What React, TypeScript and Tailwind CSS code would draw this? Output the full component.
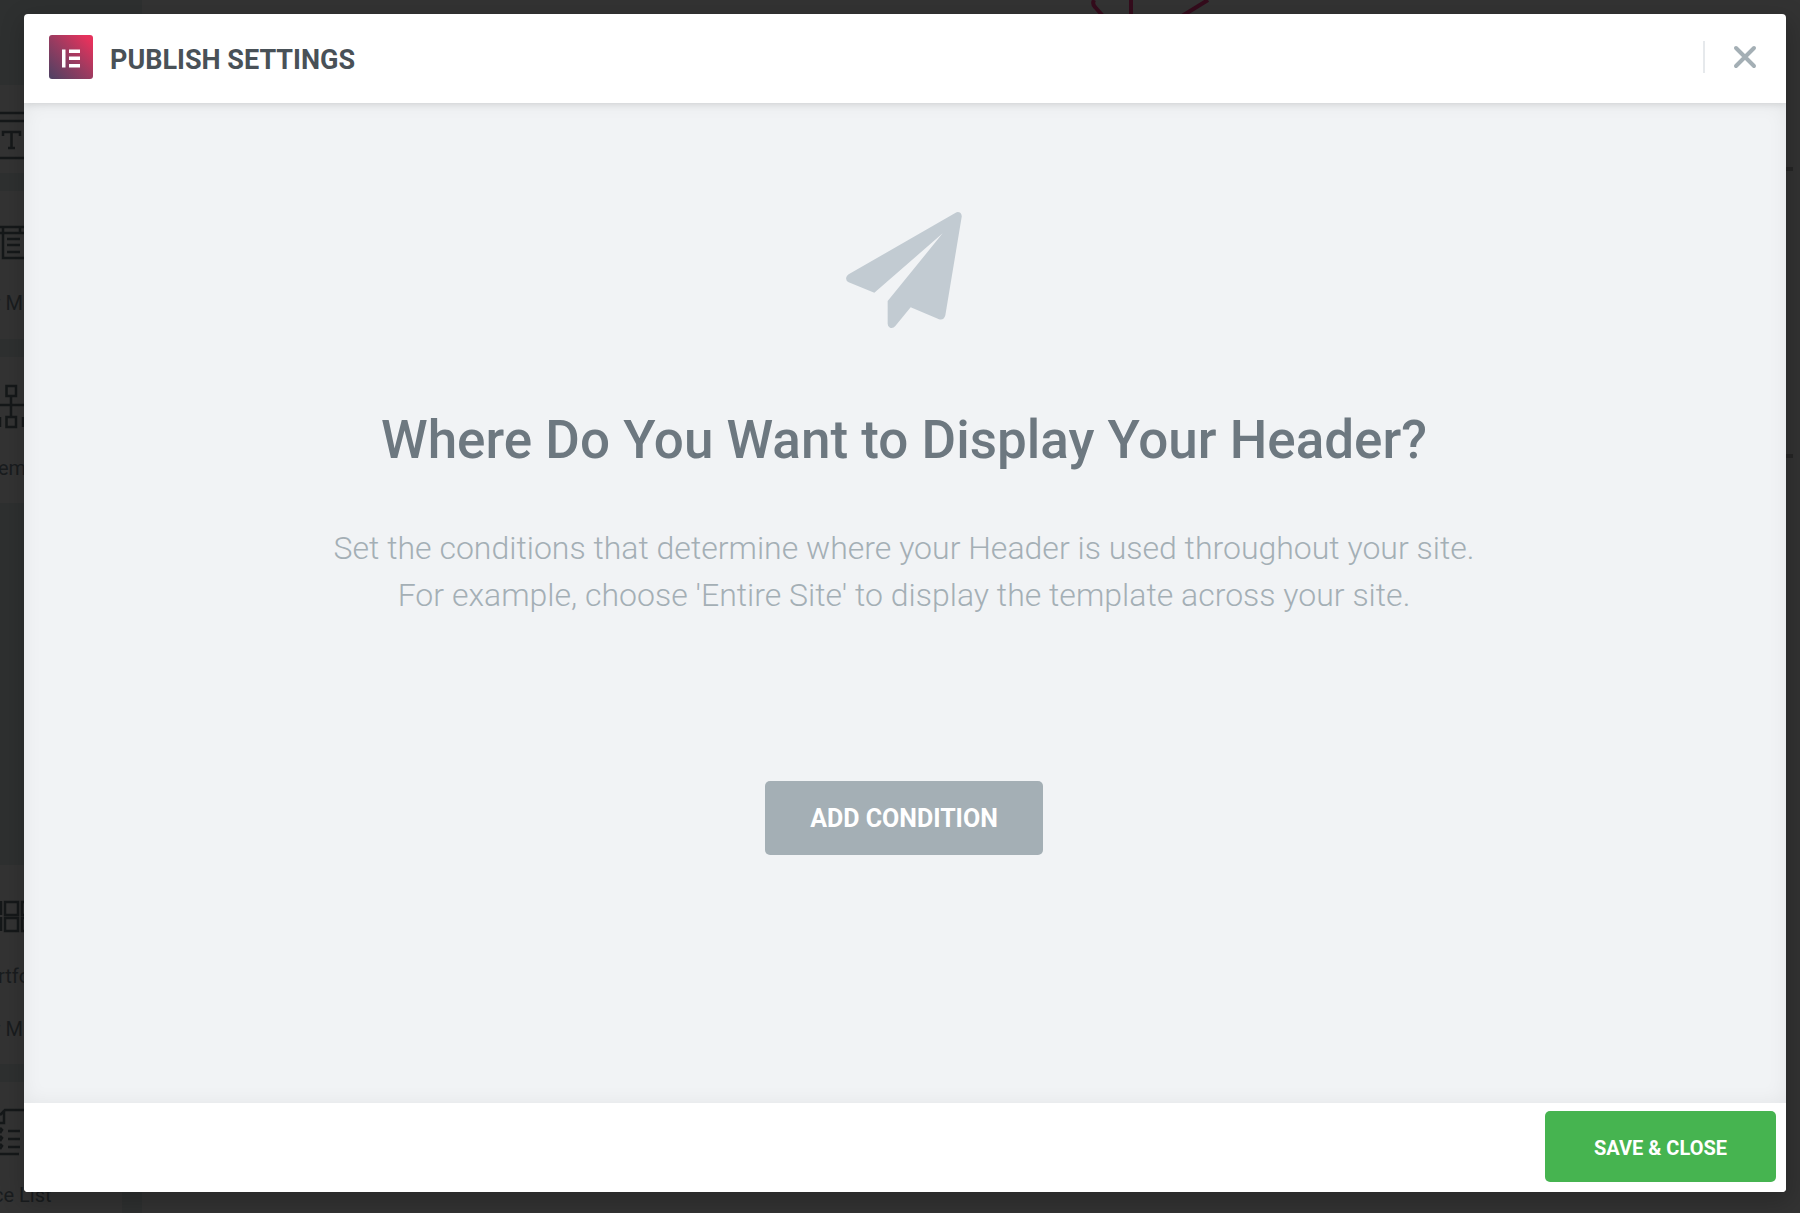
import React from "react";

function PlaneIcon() {
  return (
    <svg className="size-[116px]" viewBox="0 0 348 348" fill="#c2cbd2" aria-hidden="true">
      <path d="M329 2 C338 -3 349 4 347 15 L298 310 Q294 326 279 322 L194 286 L148 342 Q141 350 132 347 Q125 344 125 335 V267 L290 64 L85 242 L8 211 Q-2 206 1 196 Q2 191 8 187 Z" />
    </svg>
  );
}

function LogoMark() {
  return (
    <svg className="size-11" viewBox="0 0 44 44" aria-hidden="true">
      <defs>
        <linearGradient id="mark" x1="0" y1="1" x2="1" y2="0">
          <stop offset="0" stopColor="#4c4163" />
          <stop offset="0.5" stopColor="#9b3b60" />
          <stop offset="0.9" stopColor="#e5325c" />
        </linearGradient>
      </defs>
      <rect width="44" height="44" rx="3" fill="url(#mark)" />
      <path
        fill="#fff"
        d="M13 14.500h3.500v18h-3.500zM20 14.500h11v3.500h-11zM20 21.500h11v3.500h-11zM20 29h11v3.500h-11z"
      />
    </svg>
  );
}

function CloseIcon() {
  return (
    <svg className="size-6" viewBox="0 0 24 24" stroke="#a4afb5" strokeWidth="4" strokeLinecap="round" aria-hidden="true">
      <path d="M3 3L21 21M21 3L3 21" />
    </svg>
  );
}

const glyph = "block h-[50px] w-6 shrink-0";

function Backdrop() {
  return (
    <div aria-hidden="true" className="absolute inset-0 flex overflow-hidden bg-[#333333] text-[20px] leading-6 text-[#191c1e]">
      <div className="flex w-[142px] shrink-0 flex-col bg-[#2e3030] pt-[85px] pr-5">
        <div className="h-[88px] bg-[#333333] pt-[25px]">
          <svg className={glyph} viewBox="0 0 24 50" fill="none" stroke="#151819" strokeWidth="2.5">
            <path d="M0 3H24M0 11H24M0 48H24M3 26V22H20V26M11.500 22V38M8 38H15" />
          </svg>
        </div>
        <div className="mt-[18px] h-[148px] bg-[#333333] pt-[33px]">
          <svg className={glyph} viewBox="0 0 24 50" fill="none" stroke="#151819" strokeWidth="2.5">
            <path d="M0 3H24M0 9H24M3 3V34H24M20 3V9M7 15H20M7 21H20M7 28H20" />
          </svg>
          <p className="-ml-[9px] pt-[17px] whitespace-nowrap">y M</p>
        </div>
        <div className="mt-[18px] h-[146px] bg-[#333333] pt-[25px]">
          <svg className={glyph} viewBox="0 0 24 50" fill="none" stroke="#151819" strokeWidth="2.5">
            <path d="M6.500 4H16V14H6.500ZM6.500 35H16V45H6.500ZM11 14V35M0 23H24M0 35V45M23 35V45" />
          </svg>
          <p className="-ml-0.5 pt-6 whitespace-nowrap">em</p>
        </div>
        <div className="mt-[362px] h-[199px] bg-[#333333] pt-[33px]">
          <svg className={glyph} viewBox="0 0 24 50" fill="none" stroke="#151819" strokeWidth="2.5">
            <path d="M5 4H18V17H5ZM5 20H18V33H5ZM1 3V17M1 19V33M25 4H22V17H25M25 20H22V33H25" />
          </svg>
          <p className="-ml-0.5 pt-4 whitespace-nowrap">rtfo</p>
          <p className="-ml-[9px] pt-[29px] whitespace-nowrap">y M</p>
        </div>
        <div className="mt-[18px] flex-1 bg-[#333333] pt-[25px]">
          <svg className={glyph} viewBox="0 0 24 50" fill="none" stroke="#151819" strokeWidth="2.5">
            <path d="M0 8L5 3H24M4 3V16H0M0 21L2 23L0 26M0 29L2 31L0 34M0 37L2 39L0 42M8 24H20M8 32H20M8 40H20M0 47H19" />
          </svg>
          <p className="-ml-[7px] pt-[26px] whitespace-nowrap">ce List</p>
        </div>
      </div>
      <div className="flex flex-1 justify-between">
        <svg className="ml-[948px] h-4 w-32" viewBox="0 0 128 16" fill="none" stroke="#340c1c" strokeWidth="4">
          <path d="M4 0Q2 4 5 7L13 16M41 0V16M118 0L92 16" />
        </svg>
        <div className="mt-[167px] mr-[7px] flex w-10 flex-col gap-[283px]">
          <div className="h-1 bg-[#262626]" />
          <div className="h-1 bg-[#262626]" />
        </div>
      </div>
    </div>
  );
}

export default function App() {
  return (
    <div className="relative flex min-h-screen flex-col bg-[#333333] pt-3.5 pr-3.5 pb-[21px] pl-6 font-['Roboto',sans-serif]">
      <Backdrop />
      <div
        role="dialog"
        aria-labelledby="dialog-title"
        className="relative flex flex-1 flex-col overflow-hidden rounded bg-white shadow-[2px_8px_23px_3px_rgba(0,0,0,0.2)]"
      >
        <header className="relative z-10 flex h-[89px] shrink-0 items-center justify-between pr-[29px] pb-[3px] pl-[25px] shadow-[0_0_8px_rgba(0,0,0,0.15)]">
          <div className="flex items-center gap-[17px]">
            <LogoMark />
            <h1 id="dialog-title" className="pt-1.5 text-[27px] leading-8 font-bold text-[#495157]">
              PUBLISH SETTINGS
            </h1>
          </div>
          <div className="flex h-8 items-center border-l-2 border-[#e6e9ec] pl-7">
            <button type="button" aria-label="Close" className="flex">
              <CloseIcon />
            </button>
          </div>
        </header>
        <main className="flex flex-1 flex-col items-center bg-[#f1f3f5] pt-[109px] pr-0.5 text-center shadow-[inset_0_0_20px_rgba(0,0,0,0.06)]">
          <PlaneIcon />
          <h2 className="mt-20 text-[53px] leading-[64px] font-medium text-[#6d7880]">
            Where Do You Want to Display Your Header?
          </h2>
          <p className="mt-[53px] text-[32px] leading-[47px] font-light text-[#a4afb5]">
            Set the conditions that determine where your Header is used throughout your site.
            <br />
            For example, choose 'Entire Site' to display the template across your site.
          </p>
          <button
            type="button"
            className="mt-[162px] h-[74px] rounded-[5px] bg-[#a4afb5] px-[45px] pt-0.5 text-[25px] leading-8 font-bold text-white"
          >
            ADD CONDITION
          </button>
        </main>
        <footer className="flex h-[89px] shrink-0 items-start justify-end bg-white pt-2 pr-2.5">
          <button
            type="button"
            className="h-[71px] rounded-[5px] bg-[#46b450] px-[49px] pt-0.5 text-[20px] leading-6 font-bold text-white"
          >
            SAVE &amp; CLOSE
          </button>
        </footer>
      </div>
    </div>
  );
}
